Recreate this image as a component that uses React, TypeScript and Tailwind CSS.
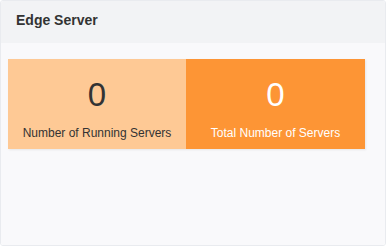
export default function App() {
  return (
    <div className="w-[387px] h-[246px] bg-white" style={{ fontFamily: '"Liberation Sans", Arial, sans-serif' }}>
      <div className="w-[386px] h-[246px] flex flex-col border border-[#e9ebef] rounded-[3px] overflow-hidden">
        <div className="h-[42px] shrink-0 bg-[#f2f3f5] px-[15px] pt-[11px]">
          <div className="text-[14px] leading-[16px] font-bold text-[#333]">Edge Server</div>
        </div>
        <div className="flex-1 bg-[#f9f9fb] pt-[16px] pl-[7px]">
          <div className="flex w-[357px] h-[90px] shadow-[1px_1px_2px_rgba(0,0,0,0.08)]">
            <div className="w-[178px] bg-[#fec995] flex flex-col items-center pt-[16px]">
              <span className="text-[33px] leading-[40px] text-[#333]">0</span>
              <span className="text-[12px] leading-[16px] mt-[10px] text-[#333]">Number of Running Servers</span>
            </div>
            <div className="w-[179px] bg-[#fd9535] flex flex-col items-center pt-[16px]">
              <span className="text-[33px] leading-[40px] text-white">0</span>
              <span className="text-[12px] leading-[16px] mt-[10px] text-white">Total Number of Servers</span>
            </div>
          </div>
        </div>
      </div>
    </div>
  );
}
